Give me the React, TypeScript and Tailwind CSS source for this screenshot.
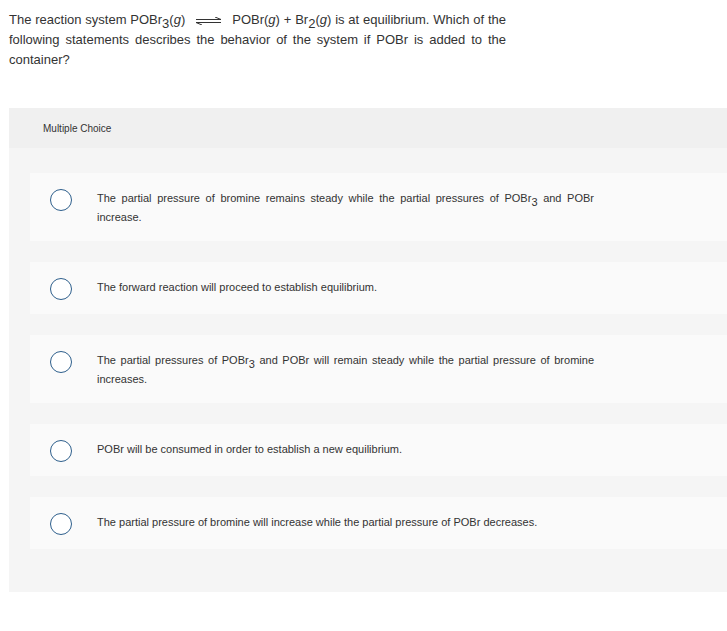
import type { ReactNode } from "react";

function EqArrow() {
  return (
    <svg className="mx-[10px] inline-block align-middle" width="27" height="8" viewBox="0 0 27 8">
      <path d="M1 2.5H26L20 0" fill="none" stroke="#333" strokeWidth="1" />
      <path d="M26 5.5H1L7 8" fill="none" stroke="#333" strokeWidth="1" />
    </svg>
  );
}

function Sub({ children }: { children: ReactNode }) {
  return <span className="relative top-[4px] leading-none">{children}</span>;
}

const options: ReactNode[] = [
  <>
    The partial pressure of bromine remains steady while the partial pressures of POBr<Sub>3</Sub> and POBr
    increase.
  </>,
  <>The forward reaction will proceed to establish equilibrium.</>,
  <>
    The partial pressures of POBr<Sub>3</Sub> and POBr will remain steady while the partial pressure of bromine
    increases.
  </>,
  <>POBr will be consumed in order to establish a new equilibrium.</>,
  <>The partial pressure of bromine will increase while the partial pressure of POBr decreases.</>,
];

export default function App() {
  return (
    <div className="min-h-screen overflow-x-hidden bg-white font-['Liberation_Sans',Arial,sans-serif] text-[#333]">
      {/* Question */}
      <div className="pl-[9px] pt-[10px]">
        <p className="w-[497px] text-justify text-[13px] leading-[20px]">
          The reaction system POBr<Sub>3</Sub>(<i>g</i>)
          <EqArrow />
          POBr(<i>g</i>) + Br<Sub>2</Sub>(<i>g</i>) is at equilibrium. Which of the following statements describes
          the behavior of the system if POBr is added to the container?
        </p>
      </div>

      {/* Multiple choice panel */}
      <div className="ml-[9px] mt-[38px] w-[760px] bg-[#f5f5f5]">
        <div className="flex h-[40px] items-center bg-[#f0f0f0] pl-[34px] text-[10px]">Multiple Choice</div>
        <div className="flex flex-col gap-[21px] pb-[43px] pl-[21px] pt-[25px]">
          {options.map((opt, i) => (
            <div key={i} className="flex items-start bg-[#fafafa] pb-[14px] pl-[20px] pt-[16px]">
              <span className="h-[22px] w-[22px] shrink-0 rounded-full border-[1.5px] border-[#2e5f8c] bg-white" />
              <p className="ml-[25px] w-[497px] text-justify text-[11px] leading-[19px]">{opt}</p>
            </div>
          ))}
        </div>
      </div>
    </div>
  );
}
